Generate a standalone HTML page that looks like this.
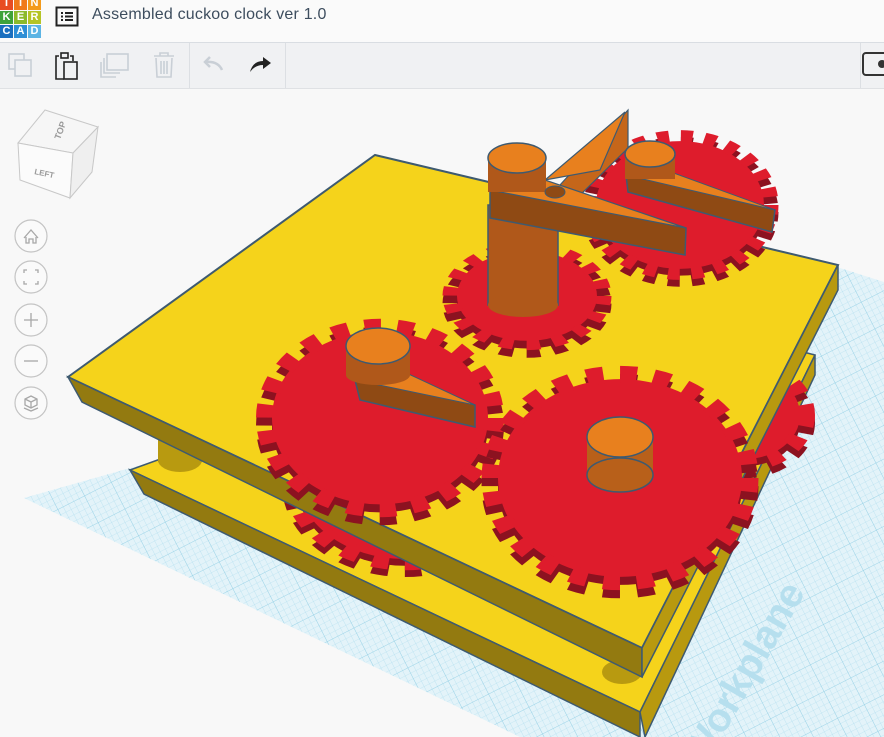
<!DOCTYPE html>
<html><head><meta charset="utf-8"><style>
html,body{margin:0;padding:0;width:884px;height:737px;overflow:hidden;background:#f8f8f8;font-family:"Liberation Sans",sans-serif}
#hdr{position:absolute;left:0;top:0;width:884px;height:42px;background:#fafafa;border-bottom:1px solid #d9dde2}
#tb{position:absolute;left:0;top:43px;width:884px;height:45px;background:#f0f1f3;border-bottom:1px solid #dfe1e4}
.title{position:absolute;left:92px;top:6px;font-size:16px;color:#3d4d5e;letter-spacing:0.2px}
.sep{position:absolute;top:0;width:1px;height:45px;background:#dcdfe3}
svg{position:absolute;left:0;top:0}
</style></head><body>
<svg width="884" height="737" viewBox="0 0 884 737">
<defs>
<pattern id="g1" width="6" height="6" patternUnits="userSpaceOnUse" patternTransform="rotate(-27)">
<path d="M0 0H6M0 0V6" stroke="#a9dbed" stroke-width="0.6" fill="none"/></pattern>
<pattern id="g2" width="30" height="30" patternUnits="userSpaceOnUse" patternTransform="rotate(-27)">
<path d="M0 0H30M0 0V30" stroke="#7fc6df" stroke-width="0.8" fill="none"/></pattern>
</defs>
<polygon points="24,498 840,268 884,282 884,737 520,737" fill="#e3f3f9"/>
<polygon points="24,498 840,268 884,282 884,737 520,737" fill="url(#g1)"/>
<polygon points="24,498 840,268 884,282 884,737 520,737" fill="url(#g2)" opacity="0.7"/>
<text x="0" y="0" text-anchor="end" transform="translate(806,592) rotate(-60)" font-size="40" font-weight="bold" fill="#b6dfee" font-family="Liberation Sans,sans-serif">Workplane</text>
<!-- lower plate -->
<polygon points="130,470 600,300 815,355 640,712" fill="#f5d31b" stroke="#3e5a70" stroke-width="1.5"/>
<polygon points="130,470 640,712 640,737 144,494" fill="#937a10" stroke="#3e5a70" stroke-width="1.5"/>
<polygon points="640,712 815,355 815,375 645,737" fill="#b8990f" stroke="#3e5a70" stroke-width="1.5"/>
<ellipse cx="180" cy="460" rx="22" ry="12" fill="#b89a10"/>
<rect x="158" y="440" width="44" height="22" fill="#b89a10"/>
<ellipse cx="622" cy="672" rx="20" ry="12" fill="#b89a10"/>
<g>
<g transform="translate(405,478) scale(1,0.75)">
<circle r="108" fill="#8c1220" transform="translate(0,9)"/>
<circle r="112" fill="none" stroke="#8c1220" stroke-width="22" stroke-dasharray="16 16" transform="translate(0,9)"/>
<circle r="108" fill="#de1c2c"/>
<circle r="112" fill="none" stroke="#de1c2c" stroke-width="22" stroke-dasharray="16 16"/>
</g>
<g transform="translate(745,415) scale(1,0.8)">
<circle r="55" fill="#8c1220" transform="translate(0,9)"/>
<circle r="60" fill="none" stroke="#8c1220" stroke-width="20" stroke-dasharray="14 14" transform="translate(0,9)"/>
<circle r="55" fill="#de1c2c"/>
<circle r="60" fill="none" stroke="#de1c2c" stroke-width="20" stroke-dasharray="14 14"/>
</g>
</g>
<!-- upper plate -->
<polygon points="68,377 375,155 838,265 642,648" fill="#f5d31b" stroke="#3e5a70" stroke-width="2"/>
<polygon points="68,377 642,648 642,677 82,402" fill="#937a10" stroke="#3e5a70" stroke-width="1.5"/>
<polygon points="642,648 838,265 838,290 642,677" fill="#b8990f" stroke="#3e5a70" stroke-width="1.5"/>
<g transform="translate(680,205) scale(1,0.76)">
<circle r="84" fill="#8c1220" transform="translate(0,9)"/>
<circle r="90" fill="none" stroke="#8c1220" stroke-width="17" stroke-dasharray="11.8 11.8" transform="translate(0,9)"/>
<circle r="84" fill="#de1c2c"/>
<circle r="90" fill="none" stroke="#de1c2c" stroke-width="17" stroke-dasharray="11.8 11.8"/>
</g>
<g transform="translate(527,296) scale(1,0.64)">
<circle r="70" fill="#8c1220" transform="translate(0,12)"/>
<circle r="76" fill="none" stroke="#8c1220" stroke-width="17" stroke-dasharray="13.3 13.3" transform="translate(0,12)"/>
<circle r="70" fill="#de1c2c"/>
<circle r="76" fill="none" stroke="#de1c2c" stroke-width="17" stroke-dasharray="13.3 13.3"/>
</g>
<g transform="translate(380,418) scale(1,0.8)">
<circle r="108" fill="#8c1220" transform="translate(0,10)"/>
<circle r="114" fill="none" stroke="#8c1220" stroke-width="20" stroke-dasharray="16.3 16.3" transform="translate(0,10)"/>
<circle r="108" fill="#de1c2c"/>
<circle r="114" fill="none" stroke="#de1c2c" stroke-width="20" stroke-dasharray="16.3 16.3"/>
</g>
<g transform="translate(620,478) scale(1,0.81)">
<circle r="122" fill="#8c1220" transform="translate(0,10)"/>
<circle r="128" fill="none" stroke="#8c1220" stroke-width="21" stroke-dasharray="16.75 16.75" transform="translate(0,10)"/>
<circle r="122" fill="#de1c2c"/>
<circle r="128" fill="none" stroke="#de1c2c" stroke-width="21" stroke-dasharray="16.75 16.75"/>
</g>
<rect x="587" y="437" width="66" height="38" fill="#b8601a"/>
<ellipse cx="620" cy="475" rx="33" ry="17" fill="#b8601a" stroke="#3e5a70" stroke-width="1.5"/>
<ellipse cx="620" cy="437" rx="33" ry="20" fill="#e8801e" stroke="#3e5a70" stroke-width="1.5"/>
<rect x="488" y="205" width="70" height="100" fill="#b0581a" stroke="#3e5a70" stroke-width="1.5"/>
<ellipse cx="523" cy="305" rx="35" ry="12" fill="#b0581a"/>
<polygon points="560,185 628,110 628,148 575,200" fill="#c5661a" stroke="#3e5a70" stroke-width="1.2"/>
<polygon points="545,180 625,112 600,170" fill="#e8801e" stroke="#3e5a70" stroke-width="1.2"/>
<polygon points="490,190 545,182 686,228 685,255 490,218" fill="#8f4a14" stroke="#3e5a70" stroke-width="1.5"/>
<polygon points="490,190 545,180 686,228" fill="#e8801e" stroke="#3e5a70" stroke-width="1.2"/>
<rect x="488" y="158" width="58" height="34" fill="#b0581a"/>
<ellipse cx="517" cy="158" rx="29" ry="15" fill="#e8801e" stroke="#3e5a70" stroke-width="1.5"/>
<ellipse cx="555" cy="192" rx="10" ry="6" fill="#8f4a14" stroke="#3e5a70"/>
<polygon points="626,175 650,170 775,210 772,232 628,192" fill="#8f4a14" stroke="#3e5a70" stroke-width="1.5"/>
<polygon points="626,175 660,168 775,210" fill="#e8801e" stroke="#3e5a70"/>
<rect x="625" y="153" width="50" height="26" fill="#b0581a"/>
<ellipse cx="650" cy="154" rx="25" ry="13" fill="#e8801e" stroke="#3e5a70" stroke-width="1.5"/>
<polygon points="355,380 390,375 475,405 475,427 360,400" fill="#8f4a14" stroke="#3e5a70" stroke-width="1.5"/>
<polygon points="355,380 400,370 475,405" fill="#e8801e" stroke="#3e5a70"/>
<rect x="346" y="345" width="64" height="30" fill="#b0581a"/>
<ellipse cx="378" cy="375" rx="32" ry="10" fill="#b0581a"/>
<ellipse cx="378" cy="346" rx="32" ry="18" fill="#e8801e" stroke="#3e5a70" stroke-width="1.5"/>
<polygon points="18,143 45,110 98,127 73,153" fill="#f6f6f6" stroke="#c8c8c8"/>
<polygon points="18,143 73,153 70,198 20,180" fill="#fbfbfb" stroke="#c8c8c8"/>
<polygon points="73,153 98,127 92,172 70,198" fill="#efefef" stroke="#c8c8c8"/>
<text x="0" y="0" transform="translate(60,140) rotate(-70)" font-size="9" font-weight="bold" fill="#999">TOP</text>
<text x="0" y="0" transform="translate(34,174) rotate(12)" font-size="8" font-weight="bold" fill="#999">LEFT</text>
<g fill="#fafafa" stroke="#c4c4c4" stroke-width="1.2">
<circle cx="31" cy="236" r="16"/><circle cx="31" cy="277" r="16"/><circle cx="31" cy="320" r="16"/><circle cx="31" cy="361" r="16"/><circle cx="31" cy="403" r="16"/>
</g>
<g fill="none" stroke="#a8a8a8" stroke-width="1.3">
<path d="M24 238 L31 230 L38 238 M26 237 V243 H29 V239 H33 V243 H36 V237"/>
<path d="M24 273 V270 H27 M35 270 H38 V273 M38 281 V284 H35 M27 284 H24 V281"/>
<path d="M24 320 H38 M31 313 V327"/>
<path d="M24 361 H38"/>
<path d="M31 396 L37 399 V405 L31 408 L25 405 V399 Z M25 399 L31 402 L37 399 M31 402 V408 M24 408 L31 411 L38 408"/>
</g>
</svg>
<div id="hdr">
<div style="position:absolute;left:0;top:-3px;width:42px;height:43px;font:bold 11px 'Liberation Sans',sans-serif;color:#fff;line-height:13px">
<div style="display:flex"><span style="width:13px;height:13px;background:#e84c22;margin:0 1px 1px 0;text-align:center">T</span><span style="width:13px;height:13px;background:#f07a1a;margin:0 1px 1px 0;text-align:center">I</span><span style="width:13px;height:13px;background:#f39a1b;text-align:center">N</span></div>
<div style="display:flex"><span style="width:13px;height:13px;background:#3ea23a;margin:0 1px 1px 0;text-align:center">K</span><span style="width:13px;height:13px;background:#8cba2b;margin:0 1px 1px 0;text-align:center">E</span><span style="width:13px;height:13px;background:#b5c425;text-align:center">R</span></div>
<div style="display:flex"><span style="width:13px;height:13px;background:#1a6fbf;margin:0 1px 0 0;text-align:center">C</span><span style="width:13px;height:13px;background:#2e8fd6;margin:0 1px 0 0;text-align:center">A</span><span style="width:13px;height:13px;background:#5cb4e4;text-align:center">D</span></div>
</div>
<svg width="24" height="24" style="left:55px;top:5px" viewBox="0 0 24 24"><rect x="1.5" y="2.5" width="21" height="18" fill="none" stroke="#222" stroke-width="2"/><path d="M6 8h2M10 8h8M6 11.5h2M10 11.5h8M6 15h2M10 15h8" stroke="#222" stroke-width="2"/></svg>
<div class="title">Assembled cuckoo clock ver 1.0</div>
</div>
<div id="tb">
<svg width="884" height="45" viewBox="0 0 884 45">
<g fill="none" stroke="#c9cfd6" stroke-width="1.6">
<rect x="9" y="11" width="15" height="15"/><rect x="15" y="17" width="16" height="16" fill="#f0f1f3"/>
<rect x="107" y="11" width="21" height="16"/><path d="M104 15 V30 H120 M101 19 V34 H116"/>
<path d="M154 13 H174 M160 13 V10 H168 V13 M156 15 L157 34 H171 L172 15 M161 18 V31 M164 18 V31 M167 18 V31"/>
<path d="M222 27 Q218 18 206 19 M210 14 L205 19 L210 24" stroke-width="2.5"/>
</g>
<g fill="none" stroke="#222" stroke-width="1.6">
<path d="M59 13 H56 V36 H64 M70 13 H73 V18"/><rect x="61" y="10" width="7" height="5"/><rect x="64" y="19" width="13" height="17"/>
</g>
<path d="M250 29 Q253 18 263 18 V14 L271 20 L263 26 V22 Q255 22 250 29 Z" fill="#222"/>
<rect x="863" y="10" width="24" height="22" rx="3" fill="none" stroke="#333" stroke-width="2"/>
<circle cx="882" cy="21" r="4" fill="#333"/>
</svg>
<div class="sep" style="left:189px"></div><div class="sep" style="left:285px"></div><div class="sep" style="left:860px"></div>
</div>
</body></html>
